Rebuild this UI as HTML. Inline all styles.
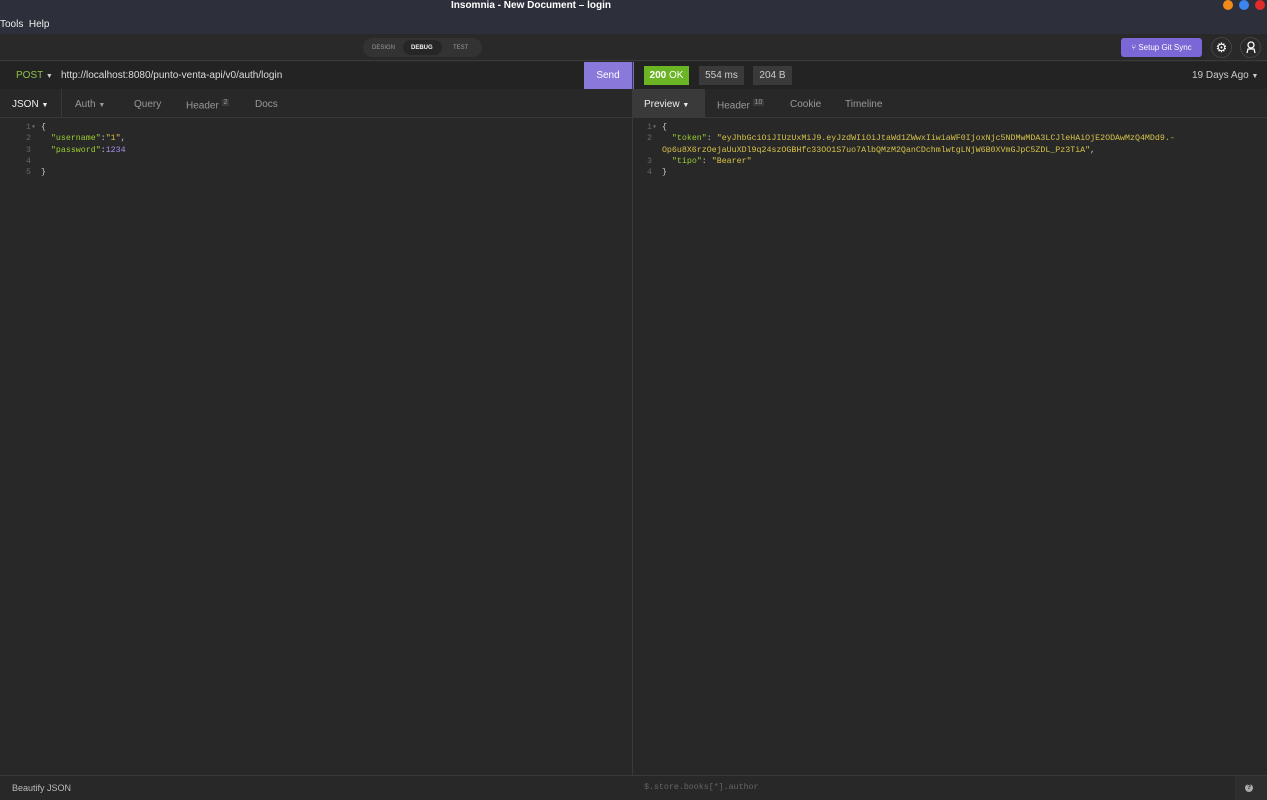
<!DOCTYPE html>
<html><head><meta charset="utf-8"><style>
*{margin:0;padding:0;box-sizing:border-box}
body{width:1267px;height:800px;background:#282828;font-family:"Liberation Sans",sans-serif;color:#ccc;position:relative;overflow:hidden;font-size:12px}
.a{position:absolute}
.mono{font-family:"Liberation Mono",monospace;font-size:8.3px}
.ln{color:#666}
.k{color:#9acd32}.s{color:#d7c34a}.n{color:#a48fe8}
</style></head><body>
<div class="a" style="left:0;top:0;width:1267px;height:34px;background:#2d303b"></div>
<div class="a" style="left:451px;top:0;color:#fff;font-size:10px;font-weight:bold">Insomnia - New Document – login</div>
<div class="a" style="left:1223px;top:0;width:10px;height:10px;border-radius:5px;background:#f28a1a"></div>
<div class="a" style="left:1239px;top:0;width:10px;height:10px;border-radius:5px;background:#3c84f0"></div>
<div class="a" style="left:1255px;top:0;width:10px;height:10px;border-radius:5px;background:#e12b2b"></div>
<div class="a" style="left:0;top:19px;color:#eee;font-size:10px">Tools&nbsp;&nbsp;Help</div>
<div class="a" style="left:0;top:34px;width:1267px;height:27px;background:#292929;border-bottom:1px solid #3a3a3a"></div>
<div class="a" style="left:363px;top:38px;width:119px;height:19px;border-radius:10px;background:#333"></div>
<div class="a" style="left:403px;top:40px;width:39px;height:15px;border-radius:8px;background:#262626"></div>
<div class="a" style="left:372px;top:45px;font-size:6px;color:#999">DESIGN</div>
<div class="a" style="left:411px;top:45px;font-size:6px;color:#eee;font-weight:bold">DEBUG</div>
<div class="a" style="left:453px;top:45px;font-size:6px;color:#999">TEST</div>
<div class="a" style="left:1121px;top:38px;width:81px;height:19px;border-radius:3px;background:#7b67d6;color:#fff;font-size:8px;line-height:19px;text-align:center">⑂ Setup Git Sync</div>
<div class="a" style="left:1211px;top:37px;width:21px;height:21px;border-radius:11px;border:1px solid #444;color:#fff;text-align:center;line-height:19px;font-size:13px">⚙</div>
<div class="a" style="left:1240px;top:37px;width:21px;height:21px;border-radius:11px;border:1px solid #444"></div>
<svg class="a" style="left:1245px;top:41px" width="12" height="13" viewBox="0 0 12 13"><circle cx="6" cy="4" r="3" fill="none" stroke="#fff" stroke-width="1.3"/><path d="M2 12 L3 8 H9 L10 12" fill="none" stroke="#fff" stroke-width="1.3"/></svg>
<div class="a" style="left:0;top:62px;width:1267px;height:27px;background:#232323"></div>
<div class="a" style="left:16px;top:70px;font-size:10px;color:#8fc04c">POST <span style="color:#ccc;font-size:7px">▼</span></div>
<div class="a" style="left:61px;top:70px;font-size:10px;color:#ddd">http://localhost:8080/punto-venta-api/v0/auth/login</div>
<div class="a" style="left:584px;top:62px;width:48px;height:27px;background:#8a78db;color:#fff;font-size:10px;line-height:27px;text-align:center">Send</div>
<div class="a" style="left:632px;top:62px;width:2px;height:27px;background:#7b67d6"></div>
<div class="a" style="left:644px;top:66px;width:45px;height:19px;background:#6bb423;color:#fff;font-size:10px;line-height:19px;text-align:center"><b>200</b> OK</div>
<div class="a" style="left:699px;top:66px;width:45px;height:19px;background:#3a3a3a;color:#ccc;font-size:10px;line-height:19px;text-align:center">554 ms</div>
<div class="a" style="left:753px;top:66px;width:39px;height:19px;background:#3a3a3a;color:#ccc;font-size:10px;line-height:19px;text-align:center">204 B</div>
<div class="a" style="left:1192px;top:70px;font-size:10px;color:#ccc">19 Days Ago <span style="font-size:7px">▼</span></div>
<div class="a" style="left:0;top:89px;width:1267px;height:29px;background:#282828;border-bottom:1px solid #383838"></div>
<div class="a" style="left:61px;top:89px;width:1px;height:29px;background:#383838"></div>
<div class="a" style="left:12px;top:99px;font-size:10px;color:#eee">JSON <span style="font-size:7px">▼</span></div>
<div class="a" style="left:75px;top:99px;font-size:10px;color:#999">Auth <span style="font-size:7px">▼</span></div>
<div class="a" style="left:134px;top:99px;font-size:10px;color:#999">Query</div>
<div class="a" style="left:186px;top:99px;font-size:10px;color:#999">Header <sup style="font-size:7px;background:#3a3a3a;padding:0 2px">2</sup></div>
<div class="a" style="left:255px;top:99px;font-size:10px;color:#999">Docs</div>
<div class="a" style="left:632px;top:62px;width:1px;height:738px;background:#3a3a3a"></div>
<div class="a" style="left:633px;top:89px;width:72px;height:29px;background:#3a3a3a"></div>
<div class="a" style="left:644px;top:99px;font-size:10px;color:#eee">Preview <span style="font-size:7px">▼</span></div>
<div class="a" style="left:717px;top:99px;font-size:10px;color:#999">Header <sup style="font-size:7px;background:#3a3a3a;padding:0 2px">10</sup></div>
<div class="a" style="left:790px;top:99px;font-size:10px;color:#999">Cookie</div>
<div class="a" style="left:845px;top:99px;font-size:10px;color:#999">Timeline</div>
<div class="a mono" style="left:26px;top:122px;line-height:11.3px;white-space:pre"><span class="ln">1▾</span> {
<span class="ln">2</span>    <span class="k">"username"</span>:<span class="s">"1"</span>,
<span class="ln">3</span>    <span class="k">"password"</span>:<span class="n">1234</span>
<span class="ln">4</span>
<span class="ln">5</span>  }</div>
<div class="a mono" style="left:647px;top:122px;line-height:11.3px;white-space:pre"><span class="ln">1▾</span> {
<span class="ln">2</span>    <span class="k">"token"</span>: <span class="s">"eyJhbGciOiJIUzUxMiJ9.eyJzdWIiOiJtaWd1ZWwxIiwiaWF0IjoxNjc5NDMwMDA3LCJleHAiOjE2ODAwMzQ4MDd9.-</span>
   <span class="s">Op6u8X6rzOejaUuXDl9q24szOGBHfc33OO1S7uo7AlbQMzM2QanCDchmlwtgLNjW6B0XVmGJpC5ZDL_Pz3TiA"</span>,
<span class="ln">3</span>    <span class="k">"tipo"</span>: <span class="s">"Bearer"</span>
<span class="ln">4</span>  }</div>
<div class="a" style="left:0;top:775px;width:1267px;height:25px;background:#282828;border-top:1px solid #3a3a3a"></div>
<div class="a" style="left:12px;top:783px;font-size:9px;color:#bbb">Beautify JSON</div>
<div class="a mono" style="left:644px;top:783px;color:#666">$.store.books[*].author</div>
<div class="a" style="left:1235px;top:776px;width:32px;height:24px;background:#2e2e2e"></div>
<div class="a" style="left:1245px;top:784px;width:8px;height:8px;border-radius:4px;background:#aaa;color:#222;font-size:7px;line-height:8px;text-align:center;font-weight:bold">?</div>
</body></html>
